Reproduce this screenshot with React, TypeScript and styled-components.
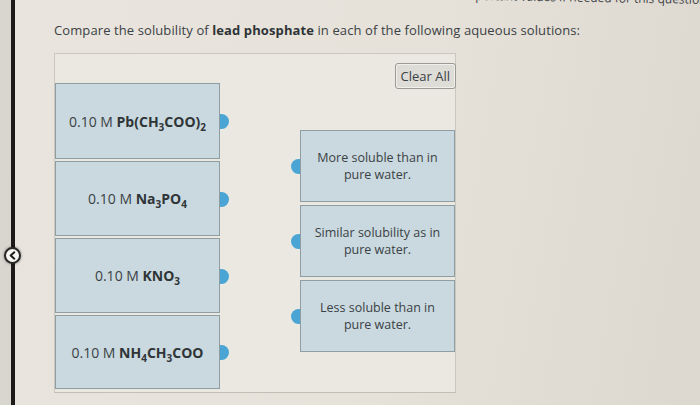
import React from 'react';
import styled, { createGlobalStyle } from 'styled-components';

const GlobalStyle = createGlobalStyle`
  html, body {
    margin: 0;
    padding: 0;
  }
  body {
    font-family: "Open Sans", "DejaVu Sans", sans-serif;
    color: #3b4145;
  }
`;

const Page = styled.div`
  width: 700px;
  height: 405px;
  overflow: hidden;
  display: flex;
  background: linear-gradient(100deg, #e9e5de 0%, #e6e2da 55%, #dcd7cf 100%);
`;

const Rail = styled.div`
  position: relative;
  width: 11px;
  flex-shrink: 0;
  background: #d9d6d0;
  border-right: 4px solid #1d1b1a;
`;

const BackBadge = styled.button`
  position: absolute;
  top: 247px;
  left: 4px;
  width: 17px;
  height: 17px;
  padding: 0;
  border-radius: 50%;
  border: 2px solid #2a2826;
  background: #f7f6f3;
  box-shadow: 0 0 3px rgba(0, 0, 0, 0.45);
  display: flex;
  align-items: center;
  justify-content: center;
`;

const Main = styled.div`
  flex: 1;
  padding-left: 39px;
  display: flex;
  flex-direction: column;
`;

// references note sits above the fold, only its lower edge shows
const TopNote = styled.div`
  height: 6px;
  overflow: hidden;
  display: flex;
  justify-content: flex-end;
  margin-right: -10px;
  span {
    font-size: 12px;
    line-height: 12px;
    margin-top: -6px;
    white-space: nowrap;
    color: #3f4447;
    transform: rotate(1deg);
    transform-origin: right bottom;
  }
`;

const Prompt = styled.p`
  margin: 15px 0 0;
  font-size: 13px;
  line-height: 18px;
  letter-spacing: 0.1px;
  b {
    font-weight: 700;
    color: #2f3437;
  }
`;

const Panel = styled.div`
  margin-top: 14px;
  width: 400px;
  height: 338px;
  border: 1px solid #cbc7bf;
  border-bottom-color: #c2beb6;
  background: #ebe8e1;
  display: flex;
  justify-content: space-between;
`;

const SourceColumn = styled.div`
  width: 165px;
  padding-top: 29px;
  display: flex;
  flex-direction: column;
  gap: 2px;
`;

const TargetColumn = styled.div`
  width: 155px;
  padding-top: 9px;
  display: flex;
  flex-direction: column;
  align-items: flex-end;
`;

const ClearButton = styled.button`
  height: 26px;
  padding: 0 5px;
  margin-right: -1px;
  font-family: inherit;
  font-size: 13px;
  color: #3b4145;
  background: #dedcd7;
  border: 1px solid #9a9995;
  border-radius: 3px;
  box-shadow: inset 0 0 0 1px #f1efea;
`;

const TargetList = styled.div`
  margin-top: 41px;
  width: 100%;
  display: flex;
  flex-direction: column;
  gap: 3px;
`;

interface CardProps {
  $side: 'left' | 'right';
  $height: number;
}

const Card = styled.div<CardProps>`
  position: relative;
  box-sizing: border-box;
  height: ${({ $height }) => $height}px;
  padding: 0 6px;
  display: flex;
  align-items: center;
  justify-content: center;
  text-align: center;
  font-size: ${({ $side }) => ($side === 'left' ? 14 : 12.5)}px;
  line-height: 17px;
  white-space: nowrap;
  background: #c9d9df;
  border: 1px solid #8e9ea3;

  &::after {
    content: '';
    position: absolute;
    top: 50%;
    width: 9px;
    height: 15px;
    margin-top: -7px;
    background: #4aa5d5;
    ${({ $side }) =>
      $side === 'left'
        ? 'right: -10px; border-radius: 0 8px 8px 0;'
        : 'left: -10px; border-radius: 8px 0 0 8px;'}
  }
`;

const Formula = styled.b`
  font-weight: 700;
  color: #2f3437;
  sub {
    font-size: 10px;
    line-height: 0;
    vertical-align: -4px;
  }
`;

const solutions: { key: string; height: number; formula: React.ReactNode }[] = [
  { key: 'pbac', height: 76, formula: <>Pb(CH<sub>3</sub>COO)<sub>2</sub></> },
  { key: 'na3po4', height: 75, formula: <>Na<sub>3</sub>PO<sub>4</sub></> },
  { key: 'kno3', height: 75, formula: <>KNO<sub>3</sub></> },
  { key: 'nh4ac', height: 74, formula: <>NH<sub>4</sub>CH<sub>3</sub>COO</> },
];

const answers = [
  ['More soluble than in', 'pure water.'],
  ['Similar solubility as in', 'pure water.'],
  ['Less soluble than in', 'pure water.'],
];

const App = () => (
  <>
    <GlobalStyle />
    <Page>
      <Rail>
        <BackBadge aria-label="Previous">
          <svg width="9" height="9" viewBox="0 0 10 10">
            <path d="M7 1.5 L3 5 L7 8.5" fill="none" stroke="#1d1b1a" strokeWidth="2.2" strokeLinecap="round" strokeLinejoin="round" />
          </svg>
        </BackBadge>
      </Rail>
      <Main>
        <TopNote>
          <span>Use the References to access important values if needed for this question.</span>
        </TopNote>
        <Prompt>
          Compare the solubility of <b>lead phosphate</b> in each of the following aqueous solutions:
        </Prompt>
        <Panel>
          <SourceColumn>
            {solutions.map((s) => (
              <Card key={s.key} $side="left" $height={s.height}>
                <span>
                  0.10 M <Formula>{s.formula}</Formula>
                </span>
              </Card>
            ))}
          </SourceColumn>
          <TargetColumn>
            <ClearButton>Clear All</ClearButton>
            <TargetList>
              {answers.map(([first, second]) => (
                <Card key={first} $side="right" $height={72}>
                  <span>
                    {first}
                    <br />
                    {second}
                  </span>
                </Card>
              ))}
            </TargetList>
          </TargetColumn>
        </Panel>
      </Main>
    </Page>
  </>
);

export default App;
